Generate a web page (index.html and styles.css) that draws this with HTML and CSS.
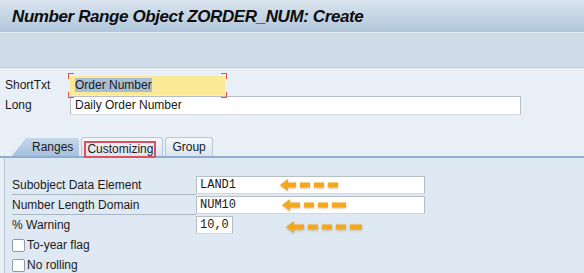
FILE: index.html
```html
<!DOCTYPE html>
<html lang="en">
<head>
  <meta charset="UTF-8">
  <title>Number Range Object ZORDER_NUM: Create</title>
  <link rel="stylesheet" href="styles.css">
</head>
<body>
  <header class="titlebar">
    <h1>Number Range Object ZORDER_NUM: Create</h1>
  </header>
  <div class="toolbar"></div>

  <main class="screen">
    <div class="head-fields">
      <label class="lbl">ShortTxt</label>
      <div class="focus-wrap">
        <span class="inp inp-short"><span class="sel">Order Number</span></span>
        <i class="corner tl"></i><i class="corner tr"></i><i class="corner bl"></i><i class="corner br"></i>
      </div>
      <label class="lbl">Long</label>
      <span class="inp inp-long">Daily Order Number</span>
    </div>

    <div class="tabstrip">
      <div class="tab tab-first active">Ranges</div>
      <div class="tab"><span class="mark">Customizing</span></div>
      <div class="tab">Group</div>
    </div>

    <div class="panel">
      <div class="row">
        <span class="plbl line">Subobject Data Element</span>
        <span class="inp mono wide">LAND1</span>
        <svg class="arrow a1" width="60" height="12" viewBox="0 0 60 12"><path d="M0 6 L8 0 L8 12 Z" fill="#f5a81c"/><rect x="8" y="3.5" width="8" height="5" fill="#f5a81c"/><rect x="20" y="3.5" width="10" height="5" fill="#f5a81c"/><rect x="34" y="3.5" width="10" height="5" fill="#f5a81c"/><rect x="48" y="3.5" width="10" height="5" fill="#f5a81c"/></svg>
      </div>
      <div class="row">
        <span class="plbl line">Number Length Domain</span>
        <span class="inp mono wide">NUM10</span>
        <svg class="arrow a2" width="66" height="12" viewBox="0 0 66 12"><path d="M0 6 L8 0 L8 12 Z" fill="#f5a81c"/><rect x="8" y="3.5" width="10" height="5" fill="#f5a81c"/><rect x="22" y="3.5" width="10" height="5" fill="#f5a81c"/><rect x="36" y="3.5" width="10" height="5" fill="#f5a81c"/><rect x="50" y="3.5" width="14" height="5" fill="#f5a81c"/></svg>
      </div>
      <div class="row">
        <span class="plbl">% Warning</span>
        <span class="inp mono short">10,0</span>
        <svg class="arrow a3" width="82" height="12" viewBox="0 0 82 12"><path d="M0 6 L8 0 L8 12 Z" fill="#f5a81c"/><rect x="8" y="3.5" width="10" height="5" fill="#f5a81c"/><rect x="22" y="3.5" width="10" height="5" fill="#f5a81c"/><rect x="36" y="3.5" width="10" height="5" fill="#f5a81c"/><rect x="50" y="3.5" width="10" height="5" fill="#f5a81c"/><rect x="64" y="3.5" width="12" height="5" fill="#f5a81c"/></svg>
      </div>
      <div class="row">
        <span class="chk"></span><span class="ctext">To-year flag</span>
      </div>
      <div class="row">
        <span class="chk"></span><span class="ctext">No rolling</span>
      </div>
    </div>
  </main>
</body>
</html>
```

FILE: styles.css
```css
body {
  margin: 0;
  font-family: "Liberation Sans", Arial, sans-serif;
  font-size: 12px;
  color: #1a1a1a;
  background: #dfe9f3;
  overflow: hidden;
}
.titlebar {
  height: 33px;
  background: linear-gradient(#d9e4ee, #b2c7dc);
  border-bottom: 1px solid #e2eaf2;
  box-sizing: border-box;
}
.titlebar h1 {
  margin: 0;
  padding: 7px 0 0 12px;
  font-size: 17px;
  letter-spacing: -0.4px;
  font-style: italic;
  font-weight: bold;
  color: #0d0d0d;
}
.toolbar {
  height: 34px;
  background: #cfdce8;
  border-bottom: 1px solid #b9c9d9;
}
.screen {
  background: #e9eff6;
}
.head-fields {
  display: grid;
  grid-template-columns: 65px auto;
  justify-content: start;
  padding: 8px 0 0 5px;
  row-gap: 1px;
}
.lbl {
  height: 19px;
  line-height: 19px;
  font-size: 12px;
}
.inp {
  display: block;
  box-sizing: border-box;
  height: 19px;
  line-height: 17px;
  padding: 0 4px;
  background: #fff;
  border: 1px solid #b8bec5;
  border-bottom-color: #d4d8dc;
}
.focus-wrap {
  position: relative;
  width: 155px;
}
.inp-short {
  background: #fce996;
  border-color: #fce996;
}
.sel {
  background: #a7bdd6;
}
.corner {
  position: absolute;
  width: 5px;
  height: 5px;
  border: 0 solid #e0504f;
}
.tl { left: -2px; top: -3px; border-width: 1px 0 0 1px; }
.tr { right: -2px; top: -3px; border-width: 1px 1px 0 0; }
.bl { left: -2px; bottom: -3px; border-width: 0 0 1px 1px; }
.br { right: -2px; bottom: -3px; border-width: 0 1px 1px 0; }
.inp-long {
  width: 451px;
}
.tabstrip {
  display: flex;
  align-items: flex-end;
  gap: 2px;
  padding: 22px 0 0 12px;
  border-bottom: 2px solid #8eaed0;
}
.tab {
  height: 18px;
  line-height: 18px;
  padding: 0 6px;
  background: linear-gradient(#f3f7fb, #dbe5ef);
  border: 1px solid #b4c7da;
  border-bottom: none;
  border-radius: 3px 3px 0 0;
  font-size: 12px;
}
.tab-first {
  padding-left: 20px;
  border: none;
  border-radius: 0 3px 0 0;
  clip-path: polygon(0 100%, 14px 0, 100% 0, 100% 100%);
}
.tab.active {
  background: linear-gradient(#c4d6ea, #a6c0dd);
}
.mark {
  display: inline-block;
  border: 2px solid #e0505a;
  line-height: 13px;
  padding: 0 1px;
  margin-left: -4px;
  margin-top: 3px;
}
.panel {
  background: #dfe9f3;
  border-left: 1px solid #b9c6d2;
  margin-left: 4px;
  padding: 17px 0 0 7px;
  height: 99px;
}
.row {
  position: relative;
  display: flex;
  align-items: center;
  height: 20px;
}
.plbl {
  width: 184px;
  height: 20px;
  line-height: 21px;
  box-sizing: border-box;
}
.plbl.line {
  border-bottom: 1px solid #a9b5c0;
}
.mono {
  font-family: "Liberation Mono", "Courier New", monospace;
  font-size: 12px;
  padding: 0 3px;
  height: 18px;
  line-height: 17px;
}
.wide {
  width: 229px;
}
.short {
  width: 37px;
}
.arrow {
  position: absolute;
  top: 4px;
  filter: drop-shadow(0 1px 1px rgba(120, 80, 0, 0.35));
}
.a1 { left: 268px; }
.a2 { left: 270px; }
.a3 { left: 274px; top: 6px; }
.chk {
  width: 11px;
  height: 11px;
  background: #fff;
  border: 1px solid #8f9aa5;
  border-radius: 2px;
  margin-right: 2px;
}
.ctext {
  line-height: 20px;
}
```
